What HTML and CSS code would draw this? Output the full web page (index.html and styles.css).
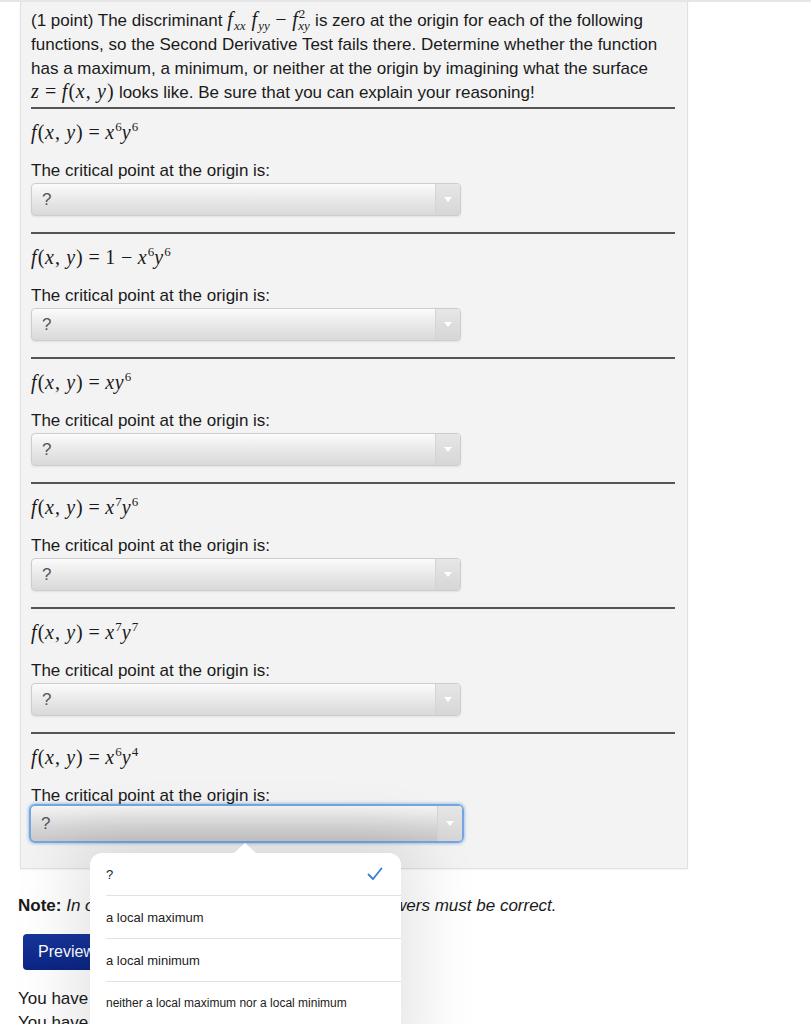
FILE: index.html
```html
<!DOCTYPE html>
<html>
<head>
<meta charset="utf-8">
<link rel="stylesheet" href="styles.css">
</head>
<body>
<div class="topbar"></div>
<div class="page">
  <div class="panel">
    <p class="intro">(1 point) The discriminant <span class="m"><i>f</i><sub><i>xx</i></sub> <i>f</i><sub><i>yy</i></sub><span class="op">−</span><i>f</i><sup>2</sup><sub class="back"><i>xy</i></sub></span> is zero at the origin for each of the following functions, so the Second Derivative Test fails there. Determine whether the function has a maximum, a minimum, or neither at the origin by imagining what the surface <span class="m"><i>z</i><span class="op">=</span><i>f</i>(<i>x</i>, <i>y</i>)</span> looks like. Be sure that you can explain your reasoning!</p>

    <div class="section">
      <div class="formula m"><i>f</i>(<i>x</i>, <i>y</i>)<span class="op">=</span><i>x</i><sup>6</sup><i>y</i><sup>6</sup></div>
      <div class="label">The critical point at the origin is:</div>
      <div class="select"><span class="sel-val">?</span><span class="sel-arrow"><span class="tri"></span></span></div>
    </div>
    <div class="section">
      <div class="formula m"><i>f</i>(<i>x</i>, <i>y</i>)<span class="op">=</span>1<span class="op">−</span><i>x</i><sup>6</sup><i>y</i><sup>6</sup></div>
      <div class="label">The critical point at the origin is:</div>
      <div class="select"><span class="sel-val">?</span><span class="sel-arrow"><span class="tri"></span></span></div>
    </div>
    <div class="section">
      <div class="formula m"><i>f</i>(<i>x</i>, <i>y</i>)<span class="op">=</span><i>xy</i><sup>6</sup></div>
      <div class="label">The critical point at the origin is:</div>
      <div class="select"><span class="sel-val">?</span><span class="sel-arrow"><span class="tri"></span></span></div>
    </div>
    <div class="section">
      <div class="formula m"><i>f</i>(<i>x</i>, <i>y</i>)<span class="op">=</span><i>x</i><sup>7</sup><i>y</i><sup>6</sup></div>
      <div class="label">The critical point at the origin is:</div>
      <div class="select"><span class="sel-val">?</span><span class="sel-arrow"><span class="tri"></span></span></div>
    </div>
    <div class="section">
      <div class="formula m"><i>f</i>(<i>x</i>, <i>y</i>)<span class="op">=</span><i>x</i><sup>7</sup><i>y</i><sup>7</sup></div>
      <div class="label">The critical point at the origin is:</div>
      <div class="select"><span class="sel-val">?</span><span class="sel-arrow"><span class="tri"></span></span></div>
    </div>
    <div class="section last">
      <div class="formula m"><i>f</i>(<i>x</i>, <i>y</i>)<span class="op">=</span><i>x</i><sup>6</sup><i>y</i><sup>4</sup></div>
      <div class="label">The critical point at the origin is:</div>
      <div class="select focused"><span class="sel-val">?</span><span class="sel-arrow"><span class="tri"></span></span></div>
    </div>
  </div>

  <p class="note"><b>Note:</b> <i>In order to get credit for this problem all answers must be correct.</i></p>
  <button class="preview">Preview My Answers</button>
  <p class="attempts">You have attempted this problem 0 times.<br>You have unlimited attempts remaining.</p>
</div>

<div class="popup">
  <div class="popup-arrow"></div>
  <div class="opt"><span>?</span><svg class="check" width="16" height="14" viewBox="0 0 16 14"><path d="M1.5 7.5 L6 12 L14.5 1.5" fill="none" stroke="#3b7fd4" stroke-width="1.8" stroke-linecap="round" stroke-linejoin="round"/></svg></div>
  <div class="opt">a local maximum</div>
  <div class="opt">a local minimum</div>
  <div class="opt small">neither a local maximum nor a local minimum</div>
</div>
</body>
</html>
```
FILE: styles.css
```css
html, body {
  margin: 0;
  padding: 0;
  background: #ffffff;
  overflow: hidden;
}
body {
  font-family: "Liberation Sans", Arial, sans-serif;
  font-size: 17px;
  color: #1a1a1a;
}
.topbar {
  height: 2px;
  background: #e6e6e6;
}
.page {
  padding-left: 18px;
}
.panel {
  margin-left: 2px;
  width: 644px;
  padding: 7px 12px 25px 10px;
  background: #f3f3f3;
  border: 1px solid #e0e0e0;
  border-top: none;
  box-shadow: 0 1px 2px rgba(0,0,0,0.05);
}
.intro {
  margin: 0;
  line-height: 24px;
  padding-bottom: 2px;
  border-bottom: 2px solid #555;
}
.m {
  font-family: "Liberation Serif", "Times New Roman", serif;
  font-size: 20px;
  letter-spacing: 0.6px;
  line-height: 0;
}
.m i { padding-right: 0.5px; }
.op {
  margin: 0 5px;
}
.m sub, .m sup {
  font-size: 13px;
  line-height: 0;
  letter-spacing: 0;
}
.m sup { vertical-align: 8px; }
.m sub { vertical-align: -4px; }
.m sub.back { margin-left: -7px; }
.section {
  padding-top: 11px;
  padding-bottom: 16px;
  border-bottom: 2px solid #555;
}
.section.last {
  border-bottom: none;
  padding-bottom: 0;
}
.formula {
  line-height: 24px;
}
.label {
  margin-top: 15px;
  line-height: 24px;
}
.select {
  display: flex;
  width: 428px;
  height: 31px;
  border: 1px solid #cdcdcd;
  border-radius: 4px;
  background: linear-gradient(#fbfbfb, #e9e9e9 50%, #d9d9d9);
  box-shadow: 0 1px 2px rgba(0,0,0,0.08);
}
.sel-val {
  flex: 1;
  padding-left: 10px;
  line-height: 31px;
  font-size: 17px;
  color: #555;
}
.sel-arrow {
  width: 24px;
  border-left: 1px solid #d4d4d4;
  display: flex;
  align-items: center;
  justify-content: center;
  background: linear-gradient(#e6e6e6, #d6d6d6);
  border-radius: 0 3px 3px 0;
}
.tri {
  width: 0;
  height: 0;
  border-left: 4px solid transparent;
  border-right: 4px solid transparent;
  border-top: 5px solid #ffffff;
}
.select.focused {
  margin-top: -4px;
  margin-left: -2px;
  width: 431px;
  height: 35px;
  border: 2px solid #76a6dd;
  border-radius: 6px;
  box-shadow: 0 0 3px 1px rgba(118,166,221,0.6);
  background: linear-gradient(#f5f5f5, #d8d8d8 60%, #c9c9c9);
}
.select.focused .sel-val { line-height: 35px; }
.note {
  margin: 25px 0 0 0;
  line-height: 24px;
}
.preview {
  margin-top: 16px;
  margin-left: 5px;
  height: 36px;
  padding: 0 15px;
  border: none;
  border-radius: 4px;
  background: linear-gradient(#17359a, #0b2584);
  color: #ffffff;
  font-family: "Liberation Sans", Arial, sans-serif;
  font-size: 16px;
}
.attempts {
  margin: 17px 0 0 0;
  line-height: 24px;
}
.popup {
  position: absolute;
  left: 90px;
  top: 853px;
  width: 311px;
  height: 200px;
  background: #ffffff;
  border-radius: 12px;
  box-shadow: 0 0 60px 20px rgba(0,0,0,0.10);
}
.popup-arrow {
  position: absolute;
  left: 143px;
  top: -10px;
  width: 0;
  height: 0;
  border-left: 12px solid transparent;
  border-right: 12px solid transparent;
  border-bottom: 11px solid #ffffff;
}
.opt {
  margin-left: 16px;
  height: 42px;
  border-bottom: 1px solid #e2e2e2;
  display: flex;
  align-items: center;
  justify-content: space-between;
  padding-right: 18px;
  font-size: 13px;
  color: #222;
}
.opt.small {
  font-size: 12px;
  border-bottom: none;
}
.check { display: block; }
```
